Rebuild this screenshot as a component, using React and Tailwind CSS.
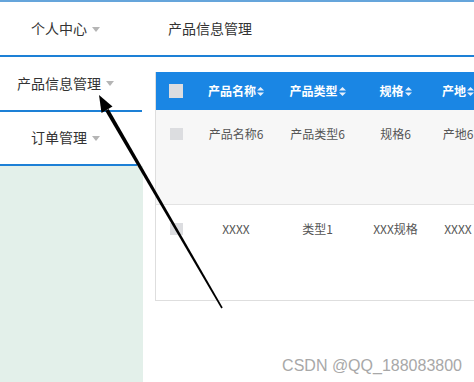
import React from "react";

const COLS = [
  { key: "name", label: "产品名称", w: "w-[80px]" },
  { key: "type", label: "产品类型", w: "w-[83px]" },
  { key: "spec", label: "规格", w: "w-[73px]" },
  { key: "place", label: "产地", w: "w-[52px]" },
  { key: "price", label: "价格", w: "w-[70px]" },
];

const ROWS = [
  { name: "产品名称6", type: "产品类型6", spec: "规格6", place: "产地6", price: "6", bg: "bg-[#f7f7f7]" },
  { name: "XXXX", type: "类型1", spec: "XXX规格", place: "XXXX", price: "1", bg: "bg-white" },
];

function Caret() {
  return (
    <svg width="8" height="5" viewBox="0 0 8 5" className="ml-[5px] mt-[1px]">
      <path d="M0 0 L8 0 L4 5 Z" fill="#b5b5b5" />
    </svg>
  );
}

function SortIcon() {
  return (
    <svg width="7" height="9" viewBox="0 0 7 9" className="ml-[1px]">
      <path d="M0 3.5 L3.5 0 L7 3.5 Z" fill="#e6f0fb" />
      <path d="M0 5.5 L7 5.5 L3.5 9 Z" fill="#e6f0fb" />
    </svg>
  );
}

function Box({ size }) {
  return <div className={`${size} bg-[#dcdde0]`} />;
}

export default function App() {
  return (
    <div className="relative w-[474px] h-[382px] overflow-hidden bg-white font-['Noto_Sans_CJK_SC','Liberation_Sans',sans-serif] text-[#333]">
      {/* top bar */}
      <div className="flex h-[57px] border-t-2 border-b-2 border-t-[#65a5db] border-b-[#1d80d6]">
        <div className="w-[143px] flex items-center pl-[31px] text-[14px]">
          个人中心
          <Caret />
        </div>
        <div className="flex items-center pl-[25px] text-[14px]">产品信息管理</div>
      </div>

      <div className="flex h-[325px]">
        {/* sidebar */}
        <div className="w-[143px] flex flex-col">
          <div className="w-[142px] h-[55px] border-b-2 border-[#1d80d6] flex items-center pl-[17px] pb-[1px] text-[14px]">
            产品信息管理
            <Caret />
          </div>
          <div className="w-[137px] h-[54px] border-b-2 border-[#1d80d6] flex items-center pl-[31px] pb-[1px] text-[14px]">
            订单管理
            <Caret />
          </div>
          <div className="flex-1 bg-[#e3f0ea]" />
        </div>

        {/* main */}
        <div className="flex-1 pl-[12px] pt-[15px] overflow-hidden">
          <div className="w-[420px] border border-[#dedede] border-t-0">
            <div className="flex h-[38px] bg-[#1a86e4] text-white text-[12px] font-bold items-center">
              <div className="w-[40px] flex justify-center">
                <Box size="w-[14px] h-[14px]" />
              </div>
              {COLS.map((c) => (
                <div key={c.key} className={`${c.w} flex items-center justify-center`}>
                  {c.label}
                  <SortIcon />
                </div>
              ))}
            </div>
            {ROWS.map((r, i) => (
              <div
                key={i}
                className={`flex h-[95px] pt-[16px] text-[12px] text-[#555] ${r.bg} ${i === 0 ? "border-b border-[#e3e3e3]" : ""}`}
              >
                <div className="w-[40px] flex justify-center pt-[2px]">
                  <Box size="w-[13px] h-[12px]" />
                </div>
                {COLS.map((c) => (
                  <div key={c.key} className={`${c.w} text-center leading-[16px]`}>
                    {r[c.key]}
                  </div>
                ))}
              </div>
            ))}
          </div>
        </div>
      </div>

      {/* annotation arrow */}
      <svg className="absolute inset-0 pointer-events-none" width="474" height="382" viewBox="0 0 474 382">
        <polygon points="108.7,109 105.3,111 221.3,308.4 222.7,307.6" fill="#000" />
        <polygon points="99,95 112.5,106.5 101.5,113" fill="#000" />
      </svg>

      {/* watermark */}
      <div className="absolute right-[12px] bottom-[7px] text-[16px] leading-[18px] text-[#a8a8a8] font-['Liberation_Sans',sans-serif]">
        CSDN @QQ_188083800
      </div>
    </div>
  );
}
